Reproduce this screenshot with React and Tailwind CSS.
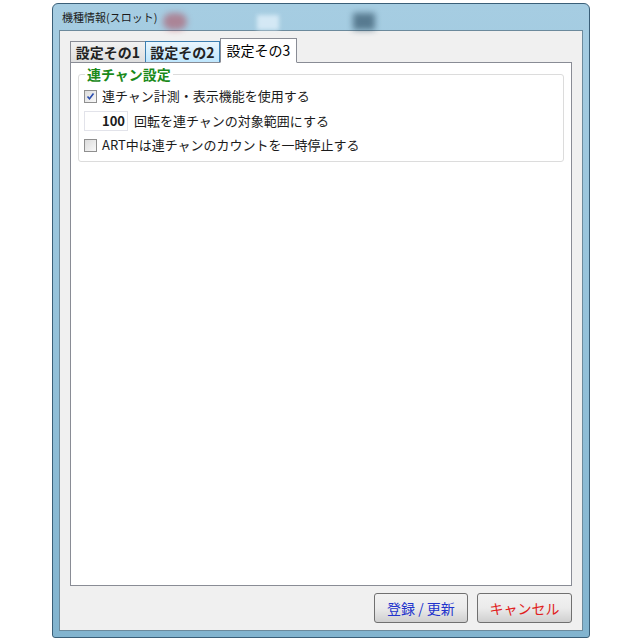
import { useState } from 'react'

const jp = { fontFamily: '"Noto Sans CJK JP", "Liberation Sans", sans-serif' }

function Check({ checked }) {
  return (
    <span className="inline-flex w-[13px] h-[13px] border border-[#8f8f8f] bg-gradient-to-br from-[#dcdcdc] to-[#f8f8f8] items-center justify-center">
      {checked && (
        <svg width="9" height="9" viewBox="0 0 9 9">
          <path d="M1.5 4.5 L3.5 6.8 L7.5 1.5" fill="none" stroke="#2a4dae" strokeWidth="1.6" />
        </svg>
      )}
    </span>
  )
}

export default function App() {
  const [tab, setTab] = useState(2)
  const [useRen, setUseRen] = useState(true)
  const [pauseArt, setPauseArt] = useState(false)
  const tabs = ['設定その1', '設定その2', '設定その3']

  return (
    <div className="w-[640px] h-[640px] bg-white relative" style={jp}>
      <div className="absolute left-[52px] top-[3px] w-[538px] h-[635px] rounded-t-[6px] rounded-b-[3px] border border-[#3a5f78] bg-gradient-to-b from-[#a6cde2] via-[#95c2da] to-[#82b4cf] flex flex-col px-[6px] pb-[6px]">
        {/* title bar */}
        <div className="h-[26px] flex items-center pl-[3px] text-[11px] text-[#1b1b1b] relative">
          <span className="absolute left-[104px] top-[9px] w-[24px] h-[17px] rounded-full bg-[#b04a5a] opacity-55 blur-[3px]" />
          <span className="absolute left-[198px] top-[11px] w-[22px] h-[15px] bg-[#e0f0fa] opacity-80 blur-[2px]" />
          <span className="absolute left-[294px] top-[9px] w-[22px] h-[17px] bg-[#24445a] opacity-60 blur-[3px]" />
          <span className="relative">機種情報(スロット)</span>
        </div>
        {/* client area */}
        <div className="flex-1 bg-[#f0f0f0] border border-[#6c8a9c] flex flex-col px-[10px] pt-[6px] pb-[7px]">
          {/* tabs */}
          <div className="flex items-end h-[25px] relative z-10">
            {tabs.map((t, i) => {
              const sel = i === tab
              return (
                <button
                  key={t}
                  onClick={() => setTab(i)}
                  className={
                    sel
                      ? 'w-[77px] h-[25px] -mb-px bg-white border border-[#898c95] border-b-white text-[14px] text-black'
                      : i === 1
                      ? 'w-[75px] h-[21px] -ml-px bg-gradient-to-b from-[#eaf6fd] to-[#bee6fd] border border-[#3c7fb1] border-b-0 text-[14px] font-semibold text-[#222]'
                      : 'w-[76px] h-[21px] bg-gradient-to-b from-[#f2f2f2] to-[#dedede] border border-[#898c95] border-b-0 text-[14px] font-semibold text-[#222]'
                  }
                >
                  {t}
                </button>
              )
            })}
          </div>
          {/* tab page */}
          <div className="flex-1 bg-white border border-[#898c95] px-[7px] pt-[3px]">
            {tab === 2 && (
              <fieldset className="border border-[#dcdcdc] rounded-[3px] px-[5px] pb-[6px]">
                <legend className="px-[2px] ml-[1px] text-[14px] font-bold text-[#1a8a1a] leading-[16px]">連チャン設定</legend>
                <label className="flex items-center gap-[5px] h-[20px] mt-[4px] text-[13px] text-[#1b1b1b] cursor-pointer" onClick={() => setUseRen(v => !v)}>
                  <Check checked={useRen} />
                  連チャン計測・表示機能を使用する
                </label>
                <div className="flex items-center gap-[6px] h-[29px] text-[13px] text-[#1b1b1b]">
                  <input
                    defaultValue="100"
                    className="w-[44px] h-[20px] border border-[#e2e3ea] text-right pr-[2px] text-[13px] font-bold outline-none"
                  />
                  回転を連チャンの対象範囲にする
                </div>
                <label className="flex items-center gap-[5px] h-[20px] text-[13px] text-[#1b1b1b] cursor-pointer" onClick={() => setPauseArt(v => !v)}>
                  <Check checked={pauseArt} />
                  ART中は連チャンのカウントを一時停止する
                </label>
              </fieldset>
            )}
          </div>
          {/* buttons */}
          <div className="flex justify-end gap-[9px] pt-[7px]">
            <button className="w-[94px] h-[30px] rounded-[3px] border border-[#707070] bg-gradient-to-b from-[#f2f2f2] via-[#ebebeb] to-[#cfcfcf] text-[14px] text-[#2233cc]">
              登録 / 更新
            </button>
            <button className="w-[95px] h-[30px] rounded-[3px] border border-[#707070] bg-gradient-to-b from-[#f2f2f2] via-[#ebebeb] to-[#cfcfcf] text-[14px] text-[#e02020]">
              キャンセル
            </button>
          </div>
        </div>
      </div>
    </div>
  )
}
